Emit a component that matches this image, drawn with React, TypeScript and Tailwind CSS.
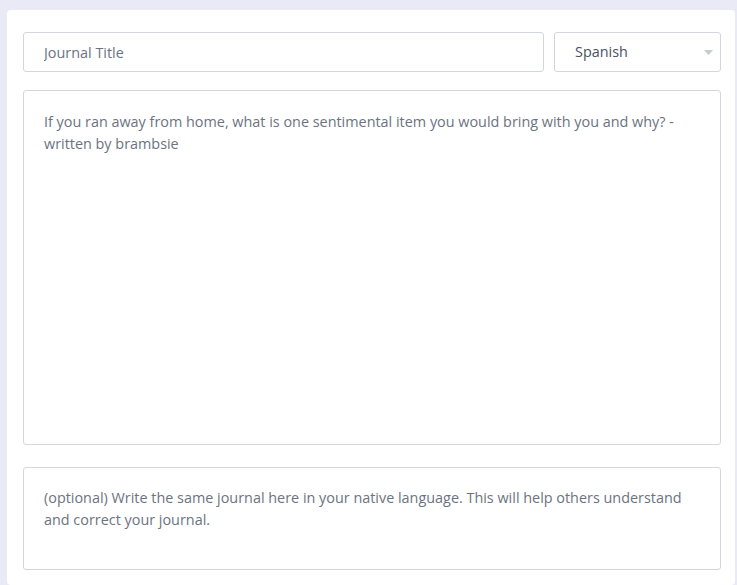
export default function App() {
  return (
    <div
      className="min-h-[585px] bg-[#e9eaf6] pl-[7px] pr-[2px] pt-[10px]"
      style={{ fontFamily: '"Open Sans", sans-serif' }}
    >
      <div className="min-h-[575px] rounded-[4px] bg-white pl-4 pr-[14px] pt-[22px]">
        <div className="flex gap-[10px]">
          <input
            type="text"
            placeholder="Journal Title"
            className="h-10 flex-1 rounded-[3px] border border-[#d4d6de] px-5 text-[14.4px] text-[#555b66] placeholder:text-[#6c7380] focus:outline-none"
          />
          <div className="relative w-[167px]">
            <select className="h-10 w-full appearance-none rounded-[3px] border border-[#d4d6de] bg-white px-5 text-[14.4px] text-[#4b5160] focus:outline-none">
              <option>Spanish</option>
            </select>
            <svg
              className="pointer-events-none absolute right-[8px] top-[18px]"
              width="9"
              height="5"
              viewBox="0 0 9 5"
            >
              <path d="M0 0h9L4.5 5z" fill="#c6c9d1" />
            </svg>
          </div>
        </div>

        <textarea
          placeholder="If you ran away from home, what is one sentimental item you would bring with you and why? - written by brambsie"
          className="mt-[18px] block h-[355px] w-full resize-none rounded-[3px] border border-[#d4d6de] px-5 pt-[20px] text-[14.4px] leading-[22px] text-[#555b66] placeholder:text-[#6c7380] focus:outline-none"
        />

        <textarea
          placeholder="(optional) Write the same journal here in your native language. This will help others understand and correct your journal."
          className="mt-[22px] block h-[103px] w-full resize-none rounded-[3px] border border-[#d4d6de] px-5 pt-[19px] text-[14.4px] leading-[22px] text-[#555b66] placeholder:text-[#6c7380] focus:outline-none"
        />
      </div>
    </div>
  );
}
